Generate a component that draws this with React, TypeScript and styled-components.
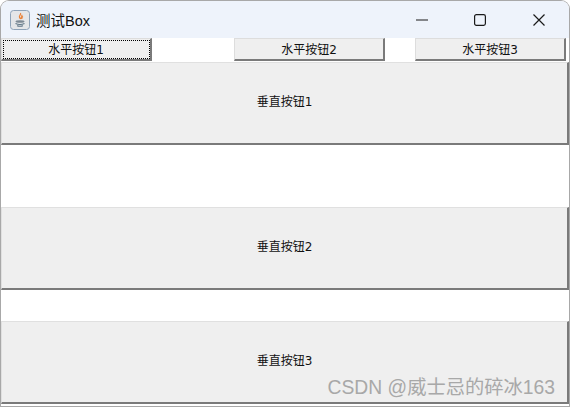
import React from 'react'
import styled, { createGlobalStyle } from 'styled-components'

const GlobalStyle = createGlobalStyle`
  html, body {
    margin: 0;
    padding: 0;
    background: #ffffff;
  }
  body {
    width: 570px;
    height: 407px;
    overflow: hidden;
  }
`

const Frame = styled.div`
  position: relative;
  width: 570px;
  height: 407px;
  box-sizing: border-box;
  padding-bottom: 2px;
  background: #a8a8a8;
  border-radius: 9px 9px 0 0;
  font-family: "DejaVu Sans", "Noto Sans CJK SC", sans-serif;
  overflow: hidden;
`

const Win = styled.div`
  display: flex;
  flex-direction: column;
  height: 100%;
  box-sizing: border-box;
  margin: 1px 1px 0 1px;
  background: #ffffff;
  border-radius: 8px 8px 0 0;
  overflow: hidden;
`

const TitleBar = styled.div`
  display: flex;
  align-items: center;
  flex: 0 0 37px;
  padding-left: 9px;
  background: #eef3fb;
`

const AppIcon = styled.svg`
  flex: none;
  width: 20px;
  height: 20px;
`

const Title = styled.span`
  margin-left: 6px;
  padding-bottom: 1px;
  font-family: "Liberation Sans", "Noto Sans CJK SC", sans-serif;
  font-size: 14.5px;
  color: #111111;
`

const WinControls = styled.div`
  display: flex;
  margin-left: auto;
  padding-right: 1px;
  height: 100%;
`

const WinControl = styled.div`
  display: flex;
  align-items: center;
  justify-content: center;
  width: 58.5px;
  color: #1a1a1a;
`

const HRow = styled.div`
  display: flex;
  flex: 0 0 24px;
  box-sizing: border-box;
  background: #ffffff;
`

const HButton = styled.div<{ $gap?: number; $focused?: boolean }>`
  position: relative;
  display: flex;
  align-items: center;
  justify-content: center;
  box-sizing: border-box;
  width: 151px;
  height: 23px;
  padding-bottom: 2px;
  margin-right: ${p => p.$gap ?? 0}px;
  background: #efefef;
  border: 1px solid #dddddd;
  border-right: 2px solid #7a7a7a;
  border-bottom: 2px solid #7a7a7a;
  font-size: 12px;
  color: #111111;
  ${p => p.$focused && `
    outline: 1px dotted #000000;
    outline-offset: -3px;
  `}
`

const VButton = styled.div<{ $height: number; $gap?: number }>`
  display: flex;
  align-items: center;
  justify-content: center;
  flex: 0 0 ${p => p.$height}px;
  box-sizing: border-box;
  padding-bottom: 6px;
  margin-bottom: ${p => p.$gap ?? 0}px;
  background: #efefef;
  border: 1px solid #e0e0e0;
  border-right: 2px solid #7a7a7a;
  border-bottom: 2px solid #7a7a7a;
  font-size: 12px;
  color: #111111;
`

const Watermark = styled.div`
  position: absolute;
  right: 15px;
  bottom: 7px;
  font-family: "Liberation Sans", "Noto Sans CJK SC", sans-serif;
  font-size: 19.3px;
  color: #a8a8a8;
  white-space: nowrap;
`

const JavaIcon = () => (
  <AppIcon viewBox="0 0 20 20">
    <rect x="0.5" y="0.5" width="19" height="19" rx="3" fill="#e4e6e8" stroke="#8ea3b8" />
    <path d="M10.5 3c1 1.6-1.8 2.6-1 4.4.3.7.8 1.2 1 1.6-.1-1.300 2.400-2.300 1.200-4.200M13 6.500c-1.200.7-1.600 1.300-1 2.500" fill="none" stroke="#e8833a" strokeWidth="1.200" />
    <ellipse cx="10" cy="11.500" rx="4.500" ry="1.300" fill="#7d8a94" />
    <path d="M5.500 13.500c2.500 1.100 6.500 1.100 9 0M7 15.800c1.800.6 4.200.6 6 0" fill="none" stroke="#5f7686" strokeWidth="1.100" />
  </AppIcon>
)

const App: React.FC = () => {
  return (
    <>
      <GlobalStyle />
      <Frame>
        <Win>
          <TitleBar>
            <JavaIcon />
            <Title>测试Box</Title>
            <WinControls>
              <WinControl>
                <svg width="12" height="12" viewBox="0 0 12 12"><path d="M0 6h12" stroke="currentColor" strokeWidth="1.200" /></svg>
              </WinControl>
              <WinControl>
                <svg width="12" height="12" viewBox="0 0 12 12"><rect x="0.600" y="0.600" width="10.800" height="10.800" rx="1.800" fill="none" stroke="currentColor" strokeWidth="1.200" /></svg>
              </WinControl>
              <WinControl>
                <svg width="12" height="12" viewBox="0 0 12 12"><path d="M.5.500l11 11M11.500.500l-11 11" stroke="currentColor" strokeWidth="1.200" /></svg>
              </WinControl>
            </WinControls>
          </TitleBar>
          <HRow>
            <HButton $focused $gap={82}>水平按钮1</HButton>
            <HButton $gap={30}>水平按钮2</HButton>
            <HButton>水平按钮3</HButton>
          </HRow>
          <VButton $height={83} $gap={62}>垂直按钮1</VButton>
          <VButton $height={83} $gap={31}>垂直按钮2</VButton>
          <VButton $height={83}>垂直按钮3</VButton>
        </Win>
        <Watermark>CSDN @威士忌的碎冰163</Watermark>
      </Frame>
    </>
  )
}

export default App
